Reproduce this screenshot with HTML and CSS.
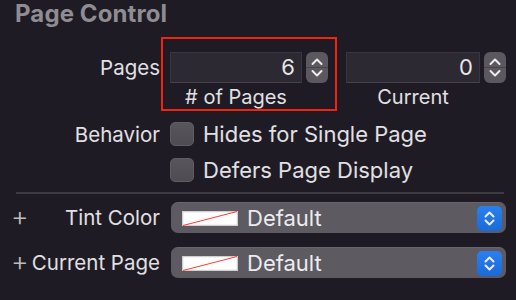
FILE: index.html
```html
<!DOCTYPE html>
<html>
<head>
<meta charset="utf-8">
<link rel="stylesheet" href="styles.css">
</head>
<body>
<div class="panel">
  <h1 class="title">Page Control</h1>

  <div class="row row-pages">
    <div class="label">Pages</div>
    <div class="content steppers">
      <div class="stepfield">
        <div class="fieldline">
          <div class="field field-pages">6</div>
          <div class="stepper"><svg viewBox="0 0 22 31" width="22" height="31"><path d="M6.5 12 L11 7.5 L15.5 12" /><path d="M6.5 19 L11 23.5 L15.5 19" /><line class="div" x1="0" y1="15.5" x2="22" y2="15.5"/></svg></div>
        </div>
        <div class="caption">#&nbsp;of Pages</div>
      </div>
      <div class="stepfield">
        <div class="fieldline">
          <div class="field field-current">0</div>
          <div class="stepper"><svg viewBox="0 0 22 31" width="22" height="31"><path d="M6.5 12 L11 7.5 L15.5 12" /><path d="M6.5 19 L11 23.5 L15.5 19" /><line class="div" x1="0" y1="15.5" x2="22" y2="15.5"/></svg></div>
        </div>
        <div class="caption">Current</div>
      </div>
    </div>
  </div>

  <div class="row row-check first">
    <div class="label">Behavior</div>
    <div class="content check"><span class="box"></span><span class="ctext">Hides for Single Page</span></div>
  </div>
  <div class="row row-check">
    <div class="label"></div>
    <div class="content check"><span class="box"></span><span class="ctext">Defers Page Display</span></div>
  </div>

  <div class="sep"></div>

  <div class="row row-popup first">
    <div class="label"><span class="plus">+</span><span>Tint Color</span></div>
    <div class="content popup">
      <span class="swatch"><svg viewBox="0 0 56 15" width="56" height="15" preserveAspectRatio="none"><rect x="0" y="0" width="56" height="15" fill="#ffffff"/><rect x="0.5" y="0.5" width="55" height="14" fill="none" stroke="#cfcfcf" stroke-width="1.5"/><line x1="1" y1="14.5" x2="55" y2="0.5" stroke="#ff3b30" stroke-width="1"/></svg></span>
      <span class="ptext">Default</span>
      <span class="pbtn"><svg viewBox="0 0 25 25" width="25" height="25"><path d="M8.5 10.5 L12.5 6.5 L16.5 10.5"/><path d="M8.5 14.5 L12.5 18.5 L16.5 14.5"/></svg></span>
    </div>
  </div>
  <div class="row row-popup">
    <div class="label"><span class="plus">+</span><span>Current Page</span></div>
    <div class="content popup">
      <span class="swatch"><svg viewBox="0 0 56 15" width="56" height="15" preserveAspectRatio="none"><rect x="0" y="0" width="56" height="15" fill="#ffffff"/><rect x="0.5" y="0.5" width="55" height="14" fill="none" stroke="#cfcfcf" stroke-width="1.5"/><line x1="1" y1="14.5" x2="55" y2="0.5" stroke="#ff3b30" stroke-width="1"/></svg></span>
      <span class="ptext">Default</span>
      <span class="pbtn"><svg viewBox="0 0 25 25" width="25" height="25"><path d="M8.5 10.5 L12.5 6.5 L16.5 10.5"/><path d="M8.5 14.5 L12.5 18.5 L16.5 14.5"/></svg></span>
    </div>
  </div>

  <div class="highlight"></div>
</div>
</body>
</html>
```

FILE: styles.css
```css
html, body {
  margin: 0;
  padding: 0;
  background: #1f1b24;
}
body {
  width: 516px;
  height: 300px;
  overflow: hidden;
  font-family: Inter, "Noto Sans", "Liberation Sans", sans-serif;
  color: #e1e0e3;
}
.panel {
  position: relative;
  width: 516px;
  height: 300px;
}
.title {
  margin: 0;
  padding: 0 0 0 15px;
  line-height: 28px;
  font-size: 24px;
  font-weight: 700;
  color: #8f8d93;
  letter-spacing: 0.1px;
}
.row {
  display: grid;
  grid-template-columns: 160px 1fr;
  column-gap: 10px;
}
.label {
  display: flex;
  justify-content: flex-end;
  align-items: center;
  font-size: 20.5px;
  color: #e1e0e3;
  white-space: nowrap;
}
.row-pages {
  margin-top: 24px;
  height: 58px;
}
.row-pages .label {
  height: 31px;
  align-self: start;
}
.steppers {
  display: flex;
  gap: 18px;
}
.stepfield {
  display: flex;
  flex-direction: column;
}
.fieldline {
  display: flex;
  gap: 4px;
}
.field {
  height: 31px;
  box-sizing: border-box;
  background: #2d2932;
  border: 1px solid #3a3640;
  border-bottom-color: #46424b;
  font-size: 22px;
  line-height: 29px;
  text-align: right;
  padding-right: 6px;
  color: #e6e5e8;
}
.field-pages { width: 132px; }
.field-current { width: 134px; }
.stepper {
  width: 22px;
  height: 31px;
  border-radius: 6px;
  background: #5b5860;
  overflow: hidden;
}
.stepper svg { display: block; }
.stepper path, .pbtn path {
  fill: none;
  stroke: #ececee;
  stroke-width: 2;
  stroke-linecap: round;
  stroke-linejoin: round;
}
.stepper .div {
  stroke: #46434b;
  stroke-width: 1;
}
.caption {
  width: 132px;
  text-align: center;
  font-size: 20px;
  line-height: 24px;
  margin-top: 2px;
  color: #e1e0e3;
}
.stepfield + .stepfield .caption { width: 134px; }

.row-check {
  height: 36px;
  align-items: center;
}
.row-check.first { margin-top: 6px; }
.check {
  display: flex;
  align-items: center;
  gap: 9px;
}
.box {
  width: 24px;
  height: 24px;
  box-sizing: border-box;
  border-radius: 5px;
  background: linear-gradient(#58555c, #4e4b52);
  border: 1px solid #5f5c63;
}
.ctext {
  font-size: 22px;
  color: #e1e0e3;
}
.sep {
  margin: 4px 12px 0 16px;
  height: 2px;
  background: #3d3a42;
}
.row-popup {
  height: 31px;
  margin-top: 14px;
}
.row-popup.first { margin-top: 8px; }
.row-popup .label {
  justify-content: space-between;
  padding-left: 11px;
}
.plus {
  font-size: 27px;
  font-weight: 300;
  color: #bdbcc0;
  line-height: 1;
  margin-top: -2px;
}
.popup {
  display: flex;
  align-items: center;
  width: 335px;
  height: 31px;
  box-sizing: border-box;
  margin-left: 1px;
  border-radius: 7px;
  background: #5d5a61;
  border-top: 1px solid #68656c;
  padding-left: 11px;
  padding-right: 4px;
}
.swatch {
  width: 56px;
  height: 15px;
  display: block;
}
.swatch svg { display: block; }
.ptext {
  margin-left: 9px;
  font-size: 22px;
  color: #ececee;
  flex: 1;
}
.pbtn {
  width: 25px;
  height: 25px;
  border-radius: 5px;
  background: linear-gradient(#2b7ff0, #1a6ad9);
}
.pbtn svg { display: block; }

.highlight {
  position: absolute;
  left: 161px;
  top: 37px;
  width: 176px;
  height: 74px;
  box-sizing: border-box;
  border: 2px solid #f2230f;
}
```
